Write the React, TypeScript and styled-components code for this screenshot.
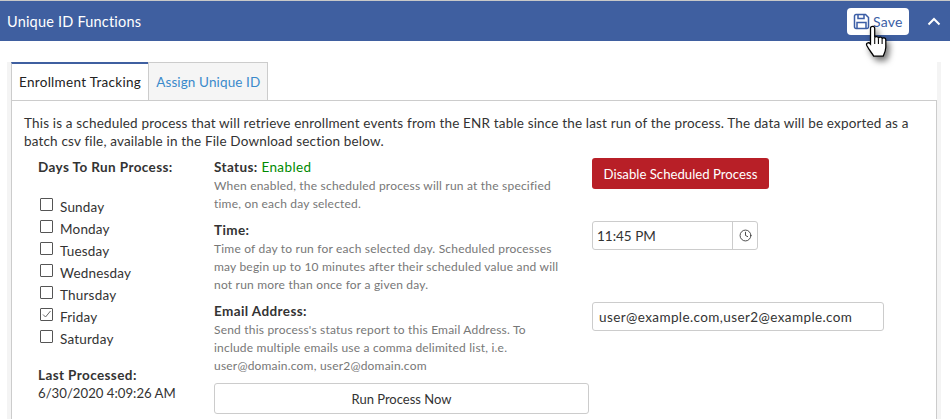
import styled, { createGlobalStyle } from "styled-components";
import { Clock } from "lucide-react";

const GlobalStyle = createGlobalStyle`
  html, body {
    margin: 0;
    padding: 0;
    background: #fff;
    font-family: "Lato", "Noto Sans", sans-serif;
    color: #333;
  }
  * { box-sizing: border-box; }
`;

const Page = styled.div`
  position: relative;
  width: 950px;
  height: 419px;
  overflow: hidden;
  border-top: 1px solid #c8c8c8;
`;

const Header = styled.header`
  height: 40px;
  background: #3f5fa0;
  display: flex;
  align-items: center;
  padding: 0 9px 0 7px;
`;

const Title = styled.h1`
  flex: 1;
  margin: 0;
  font-size: 14.5px;
  font-weight: 400;
  color: #fff;
  letter-spacing: 0.2px;
`;

const SaveButton = styled.button`
  display: flex;
  align-items: center;
  gap: 3px;
  width: 62px;
  height: 27px;
  padding: 0 0 0 6px;
  margin-right: 18px;
  border: 0;
  border-radius: 4px;
  background: #fff;
  color: #3b5ea6;
  font: inherit;
  font-size: 14px;
  letter-spacing: 0.2px;
`;

const Body = styled.div`
  padding: 21px 9px 0 7px;
`;

const TabCard = styled.div`
  border-left: 4px solid #f4f4f4;
  border-right: 4px solid #f4f4f4;
`;

const Tabs = styled.div`
  display: flex;
  height: 38px;
`;

const Tab = styled.div<{ $active?: boolean }>`
  display: flex;
  align-items: center;
  padding: 0 7px;
  font-size: 13.5px;
  letter-spacing: ${(p) => (p.$active ? "0.3px" : "0.12px")};
  color: ${(p) => (p.$active ? "#222" : "#3a8acb")};
  background: ${(p) => (p.$active ? "#fff" : "#f5f5f5")};
  border: 1px solid #ccc;
  border-width: ${(p) => (p.$active ? "0 0 0 1px" : "1px 1px 0 1px")};
  border-top: ${(p) => (p.$active ? "2px solid #3f5fa0" : "1px solid #ccc")};
`;

const Panel = styled.section`
  border: 1px solid #ccc;
  padding: 13px 12px 0 12px;
  height: 330px;
`;

const Intro = styled.p`
  margin: 0 0 8px;
  font-size: 13.5px;
  line-height: 18px;
  letter-spacing: 0.17px;
  color: #333;
`;

const Columns = styled.div`
  display: grid;
  grid-template-columns: 176px 378px 1fr;
  padding-left: 14px;
`;

const DaysColumn = styled.div`
  display: flex;
  flex-direction: column;
`;

const Label = styled.div`
  font-size: 13.5px;
  font-weight: 700;
  line-height: 18px;
  letter-spacing: 0.4px;
  color: #333;
`;

const DayList = styled.ul`
  list-style: none;
  margin: 20px 0 16px;
  padding: 0;
`;

const Day = styled.li`
  display: flex;
  align-items: center;
  gap: 7px;
  height: 22px;
  padding-left: 2px;
  font-size: 13.5px;
  letter-spacing: 0.2px;
`;

const Box = styled.span`
  display: flex;
  width: 13px;
  height: 13px;
  margin-top: -5px;
  border: 1px solid #555;
  border-radius: 1px;
  background: #fff;
`;

const StampText = styled.div`
  font-size: 13.2px;
  line-height: 18px;
`;

const DetailsColumn = styled.div`
  display: flex;
  flex-direction: column;
`;

const Setting = styled.div`
  margin-bottom: 8px;
`;

const Enabled = styled.span`
  font-weight: 400;
  color: #008a00;
`;

const Help = styled.p`
  margin: 1px 0 0;
  font-size: 12px;
  line-height: 18px;
  letter-spacing: 0.2px;
  color: #777;
`;

const RunButton = styled.button`
  width: 375px;
  height: 31px;
  border: 1px solid #ccc;
  border-radius: 3px;
  background: #fff;
  color: #333;
  font: inherit;
  font-size: 13px;
`;

const ControlsColumn = styled.div`
  display: flex;
  flex-direction: column;
  align-items: flex-start;
`;

const DisableButton = styled.button`
  width: 177px;
  height: 31px;
  border: 0;
  border-radius: 3px;
  background: #b81f27;
  color: #fff;
  font: inherit;
  font-size: 13.2px;
`;

const TimeGroup = styled.div`
  display: flex;
  width: 166px;
  height: 29px;
  margin-top: 32px;
  border: 1px solid #ccc;
  border-radius: 3px;
`;

const TimeValue = styled.div`
  flex: 1;
  display: flex;
  align-items: center;
  padding-left: 4px;
  font-size: 13.5px;
  border-right: 1px solid #ccc;
`;

const TimeIcon = styled.div`
  width: 24px;
  display: flex;
  align-items: center;
  justify-content: center;
  color: #333;
`;

const EmailInput = styled.div`
  display: flex;
  align-items: center;
  width: 292px;
  height: 29px;
  margin-top: 52px;
  padding-left: 6px;
  border: 1px solid #ccc;
  border-radius: 3px;
  font-size: 13.5px;
  letter-spacing: 0.4px;
`;

const Cursor = styled.svg`
  position: absolute;
  left: 864px;
  top: 24px;
  filter: drop-shadow(3px 4px 3px rgba(0, 0, 0, 0.55));
`;

const days: [string, boolean][] = [
  ["Sunday", false],
  ["Monday", false],
  ["Tuesday", false],
  ["Wednesday", false],
  ["Thursday", false],
  ["Friday", true],
  ["Saturday", false],
];

export default function App() {
  return (
    <Page>
      <GlobalStyle />
      <Header>
        <Title>Unique ID Functions</Title>
        <SaveButton>
          <svg width="17" height="17" viewBox="0 0 17 17" fill="none" stroke="#3b5ea6" strokeWidth="1.5">
            <path d="M1.500 3a1.500 1.500 0 0 1 1.500-1.500h9.500l3 3V14a1.500 1.500 0 0 1-1.500 1.500H3A1.500 1.500 0 0 1 1.500 14z" />
            <path d="M5 1.500v4h6v-4M4 15.500v-6h9v6" />
          </svg>
          Save
        </SaveButton>
        <svg width="14" height="9" viewBox="0 0 14 9" fill="none" stroke="#fff" strokeWidth="2">
          <path d="M1.500 7.500 7 2l5.500 5.500" />
        </svg>
      </Header>
      <Body>
        <TabCard>
          <Tabs>
            <Tab $active>Enrollment Tracking</Tab>
            <Tab>Assign Unique ID</Tab>
          </Tabs>
          <Panel>
            <Intro>
              This is a scheduled process that will retrieve enrollment events from the ENR table since the last run of
              the process. The data will be exported as a batch csv file, available in the File Download section below.
            </Intro>
            <Columns>
              <DaysColumn>
                <Label>Days To Run Process:</Label>
                <DayList>
                  {days.map(([name, checked]) => (
                    <Day key={name}>
                      <Box>
                        {checked && (
                          <svg width="11" height="11" viewBox="0 0 11 11" fill="none" stroke="#666" strokeWidth="1">
                            <path d="M2 5.500 4.500 8 9.500 2" />
                          </svg>
                        )}
                      </Box>
                      {name}
                    </Day>
                  ))}
                </DayList>
                <Label>Last Processed:</Label>
                <StampText>6/30/2020 4:09:26 AM</StampText>
              </DaysColumn>
              <DetailsColumn>
                <Setting>
                  <Label>
                    Status: <Enabled>Enabled</Enabled>
                  </Label>
                  <Help>
                    When enabled, the scheduled process will run at the specified
                    <br />
                    time, on each day selected.
                  </Help>
                </Setting>
                <Setting>
                  <Label>Time:</Label>
                  <Help>
                    Time of day to run for each selected day. Scheduled processes
                    <br />
                    may begin up to 10 minutes after their scheduled value and will
                    <br />
                    not run more than once for a given day.
                  </Help>
                </Setting>
                <Setting>
                  <Label>Email Address:</Label>
                  <Help>
                    Send this process's status report to this Email Address. To
                    <br />
                    include multiple emails use a comma delimited list, i.e.
                    <br />
                    user@domain.com, user2@domain.com
                  </Help>
                </Setting>
                <RunButton>Run Process Now</RunButton>
              </DetailsColumn>
              <ControlsColumn>
                <DisableButton>Disable Scheduled Process</DisableButton>
                <TimeGroup>
                  <TimeValue>11:45 PM</TimeValue>
                  <TimeIcon>
                    <Clock size={13} strokeWidth={1.6} />
                  </TimeIcon>
                </TimeGroup>
                <EmailInput>user@example.com,user2@example.com</EmailInput>
              </ControlsColumn>
            </Columns>
          </Panel>
        </TabCard>
      </Body>
      <Cursor width="32" height="38" viewBox="0 0 30 36">
        <path
          d="M6 3c0-2.400 4-2.400 4 0v9c.5-1.500 3.500-1.500 3.500.5.5-1.500 3.500-1.500 3.500.5.5-1.200 3.500-1 3.500 1v7c0 3-1 5-2.500 8.500H9c-1.500-3-4-5-6.500-10-1-2.200 1.600-3.800 3.500-1.500z"
          fill="#fff"
          stroke="#000"
          strokeWidth="1.200"
        />
        <path d="M10 12v6M13.500 12.500v5.500M17 13v5" stroke="#000" strokeWidth="1" />
      </Cursor>
    </Page>
  );
}
